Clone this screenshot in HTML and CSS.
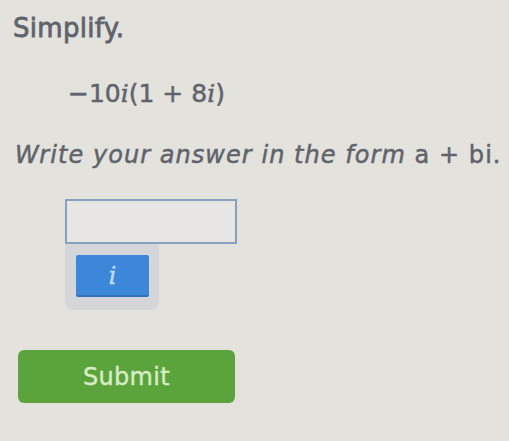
FILE: index.html
```html
<!DOCTYPE html>
<html>
<head>
<meta charset="utf-8">
<link rel="stylesheet" href="styles.css">
</head>
<body>
<div class="page">
  <div class="title">Simplify.</div>
  <div class="expr">−10<span class="var">i</span>(1 + 8<span class="var">i</span>)</div>
  <div class="prompt">Write your answer in the form <span class="plain">a + bi.</span></div>
  <div class="answer">
    <div class="input"></div>
    <div class="palette">
      <div class="key"><span>i</span></div>
    </div>
  </div>
  <div class="submit">Submit</div>
</div>
</body>
</html>
```
FILE: styles.css
```css
html, body {
  margin: 0;
  padding: 0;
  background: #e4e2dd;
}
.page {
  width: 509px;
  height: 441px;
  box-sizing: border-box;
  padding: 13px 0 0 0;
  font-family: "DejaVu Sans", Verdana, sans-serif;
  color: #5f646c;
  overflow: hidden;
}
.title {
  margin-left: 13px;
  font-size: 26px;
  line-height: 30px;
  letter-spacing: 0.3px;
  -webkit-text-stroke: 0.8px #5f646c;
}
.expr {
  margin: 36px 0 0 68px;
  font-size: 25px;
  line-height: 30px;
  -webkit-text-stroke: 0.5px #5f646c;
}
.var {
  font-family: "DejaVu Serif", serif;
  font-style: italic;
}
.prompt {
  margin: 32px 0 0 15px;
  font-size: 24px;
  letter-spacing: 1.05px;
  font-style: italic;
  line-height: 28px;
  white-space: nowrap;
  -webkit-text-stroke: 0.5px #5f646c;
}
.plain {
  font-style: normal;
}
.answer {
  margin: 30px 0 0 65px;
  width: 172px;
}
.input {
  height: 41px;
  border: 2px solid #86a0bf;
  background: #e7e6e2;
}
.palette {
  width: 94px;
  height: 66px;
  box-sizing: border-box;
  padding: 11px 10px 0 11px;
  background: #d5d6d9;
  border-radius: 0 0 8px 8px;
}
.key {
  height: 40px;
  background: #3c87d9;
  border-bottom: 2px solid #3573b8;
  border-radius: 2px;
  display: flex;
  align-items: center;
  justify-content: center;
  color: #c4dcf5;
  font-family: "DejaVu Serif", serif;
  font-style: italic;
  font-size: 25px;
  -webkit-text-stroke: 0.3px #c4dcf5;
}
.submit {
  margin: 40px 0 0 18px;
  width: 217px;
  height: 53px;
  box-sizing: border-box;
  background: #5ba43c;
  border-radius: 6px;
  color: #d8ecc6;
  font-size: 24px;
  letter-spacing: 0.3px;
  -webkit-text-stroke: 0.4px #d8ecc6;
  display: flex;
  align-items: center;
  justify-content: center;
}
```
